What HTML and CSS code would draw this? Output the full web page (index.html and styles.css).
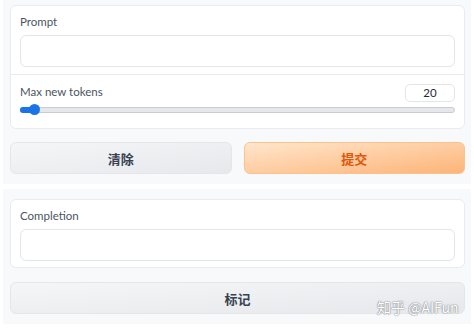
FILE: index.html
```html
<!DOCTYPE html>
<html lang="en">
<head>
    <meta charset="UTF-8">
    <title>Text generation</title>
    <link rel="stylesheet" href="styles.css">
</head>
<body>
    <div class="block top-block">
        <div class="card">
            <div class="field">
                <label class="label">Prompt</label>
                <div class="textbox"></div>
            </div>
            <div class="field slider-field">
                <div class="slider-head">
                    <label class="label">Max new tokens</label>
                    <div class="number">20</div>
                </div>
                <div class="track">
                    <div class="fill"></div>
                    <div class="thumb"></div>
                </div>
            </div>
        </div>
        <div class="button-row">
            <button class="btn secondary">清除</button>
            <button class="btn primary">提交</button>
        </div>
    </div>

    <div class="block bottom-block">
        <div class="card">
            <div class="field output-field">
                <label class="label">Completion</label>
                <div class="textbox"></div>
            </div>
        </div>
        <button class="btn secondary wide">标记</button>
    </div>

    <div class="watermark">知乎 @AIFun</div>
</body>
</html>
```

FILE: styles.css
```css
body {
    font-family: Lato, "Noto Sans", "Noto Sans CJK SC", sans-serif;
    background-color: #ffffff;
    color: #4b5563;
    margin: 0;
    padding: 0 3px;
    position: relative;
    height: 328px;
    overflow: hidden;
}

.block {
    background-color: #f8f9fb;
    padding: 5px 6px 0 7px;
}

.top-block {
    height: 184px;
    box-sizing: border-box;
}

.bottom-block {
    margin-top: 5px;
    padding-top: 10px;
    height: 135px;
    box-sizing: border-box;
}

.card {
    background-color: #ffffff;
    border: 1px solid #e9ebee;
    border-radius: 6px;
}

.field {
    padding: 9px 9px 7px 9px;
}

.field + .field {
    border-top: 1px solid #e9ebee;
}

.output-field {
    padding-bottom: 6px;
}

.label {
    display: block;
    font-size: 11.5px;
    line-height: 14px;
    color: #4b5563;
    margin-bottom: 6px;
}

.textbox {
    height: 30px;
    border: 1px solid #e3e5e8;
    border-radius: 6px;
    background-color: #ffffff;
}

.slider-field {
    padding-top: 9px;
    padding-bottom: 15px;
}

.slider-head {
    display: flex;
    justify-content: space-between;
    align-items: center;
    margin-bottom: 5px;
}

.slider-head .label {
    margin-bottom: 0;
    padding-bottom: 3px;
}

.number {
    width: 48px;
    height: 16px;
    border: 1px solid #e3e5e8;
    border-radius: 5px;
    font-size: 11.5px;
    line-height: 16px;
    text-align: center;
    color: #1f2937;
}

.track {
    position: relative;
    height: 4px;
    border: 1px solid #c9ccd1;
    border-radius: 4px;
    background-color: #e5e7eb;
}

.fill {
    position: absolute;
    left: -1px;
    top: -1px;
    width: 14px;
    height: 6px;
    border-radius: 4px;
    background-color: #1a73e8;
}

.thumb {
    position: absolute;
    left: 8px;
    top: -4px;
    width: 11px;
    height: 11px;
    border-radius: 50%;
    background-color: #1a73e8;
}

.button-row {
    display: flex;
    gap: 12px;
    margin-top: 13px;
}

.btn {
    flex: 1;
    height: 32px;
    border-radius: 6px;
    font-family: "Noto Sans CJK SC", sans-serif;
    font-size: 13px;
    font-weight: 700;
    cursor: pointer;
}

.secondary {
    border: 1px solid #e4e6ea;
    background: linear-gradient(to bottom right, #f5f6f8, #e6e8eb);
    color: #374151;
}

.primary {
    border: 1px solid #fcc28e;
    background: linear-gradient(to bottom right, #ffe6cc, #fdb478);
    color: #e0560a;
}

.wide {
    display: block;
    width: 100%;
    margin-top: 14px;
}

.watermark {
    position: absolute;
    left: 377px;
    top: 297px;
    font-family: "Noto Sans CJK SC", sans-serif;
    font-size: 14px;
    color: #ffffff;
    text-shadow: 0 0 1px #8a8f96, 0 0 1px #8a8f96, 0 0 2px #9aa0a6;
}
```
